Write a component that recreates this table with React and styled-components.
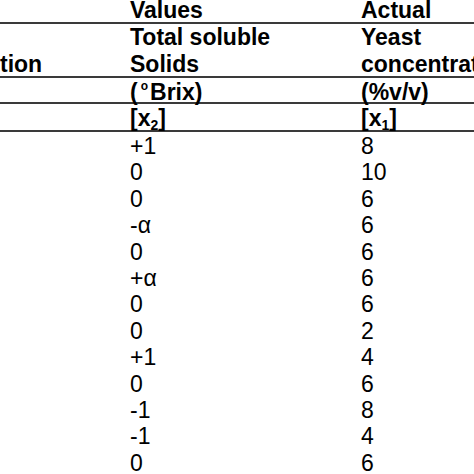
// Design table crop: coded / actual values for total soluble solids and yeast

import React from "react";
import styled, { createGlobalStyle } from "styled-components";

const GlobalStyle = createGlobalStyle`
  html, body {
    margin: 0;
    padding: 0;
    background: #ffffff;
    overflow: hidden;
  }
  body {
    font-family: "Liberation Sans", Arial, sans-serif;
    color: #000000;
  }
`;

const Sheet = styled.div`
  width: 520px;
  margin-top: -3px;
  font-size: 23px;
`;

const Body = styled.div`
  padding-top: 1px;
`;

// one table row: three columns, its own height and an optional rule below
const Row = styled.div`
  display: grid;
  grid-template-columns: 130px 231px 1fr;
  height: ${(p) => p.$h}px;
  line-height: ${(p) => p.$lh}px;
  padding-top: ${(p) => p.$pt || 0}px;
  box-sizing: content-box;
  border-bottom: ${(p) => (p.$rule ? "2px solid #3a3a3a" : "none")};
  font-weight: ${(p) => (p.$head ? "bold" : "normal")};
  white-space: nowrap;
`;

const Cell = styled.div`
  align-self: ${(p) => p.$align || "start"};
  overflow: visible;
`;

const Wrap = styled.span`
  display: block;
  white-space: normal;
  width: ${(p) => p.$width}px;
`;

const Sub = styled.sub`
  font-size: 14px;
  vertical-align: -4px;
  line-height: 0;
`;

const Degree = styled.sup`
  font-size: 12px;
  vertical-align: 10px;
  line-height: 0;
  margin: 0 2px 0 3px;
`;

const rows = [
  ["+1", "8"],
  ["0", "10"],
  ["0", "6"],
  ["-\u03b1", "6"],
  ["0", "6"],
  ["+\u03b1", "6"],
  ["0", "6"],
  ["0", "2"],
  ["+1", "4"],
  ["0", "6"],
  ["-1", "8"],
  ["-1", "4"],
  ["0", "6"],
];

export default function App() {
  return (
    <>
      <GlobalStyle />
      <Sheet>
        <Row $head $rule $h={25} $lh={26}>
          <Cell />
          <Cell>Values</Cell>
          <Cell>Actual</Cell>
        </Row>
        <Row $head $rule $h={52} $lh={27}>
          <Cell $align="end">tion</Cell>
          <Cell>
            <Wrap $width={150}>Total soluble Solids</Wrap>
          </Cell>
          <Cell>
            <Wrap $width={155}>Yeast concentration</Wrap>
          </Cell>
        </Row>
        <Row $head $rule $h={22} $pt={2} $lh={25}>
          <Cell />
          <Cell>
            (<Degree>o</Degree>Brix)
          </Cell>
          <Cell>(%v/v)</Cell>
        </Row>
        <Row $head $rule $h={24} $pt={2} $lh={25}>
          <Cell />
          <Cell>
            [x<Sub>2</Sub>]
          </Cell>
          <Cell>
            [x<Sub>1</Sub>]
          </Cell>
        </Row>
        <Body>
          {rows.map((r, i) => (
            <Row key={i} $h={26.4} $lh={26.4}>
              <Cell />
              <Cell>{r[0]}</Cell>
              <Cell>{r[1]}</Cell>
            </Row>
          ))}
        </Body>
      </Sheet>
    </>
  );
}
